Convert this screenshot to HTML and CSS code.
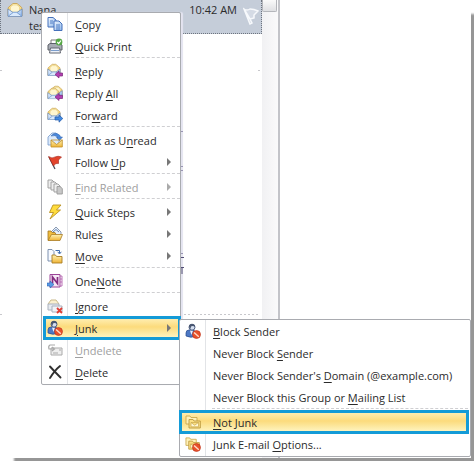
FILE: index.html
```
<!DOCTYPE html>
<html lang="en">
<head>
  <meta charset="UTF-8">
  <title>Inbox</title>
  <link rel="stylesheet" href="styles.css">
</head>
<body>

<!-- shared icon shapes -->
<svg class="defs" width="0" height="0" aria-hidden="true">
  <defs>
    <linearGradient id="gold" x1="0" y1="0" x2="0" y2="1">
      <stop offset="0" stop-color="#fff3b5"/><stop offset="1" stop-color="#efb334"/>
    </linearGradient>
    <linearGradient id="blue" x1="0" y1="0" x2="1" y2="1">
      <stop offset="0" stop-color="#f2f8ff"/><stop offset="1" stop-color="#8db6ea"/>
    </linearGradient>
    <symbol id="envelope" viewBox="0 0 16 16">
      <path d="M1 7 Q1 5 3 4 L6 1.5 H10 L13 4 Q15 5 15 7 V14 H1 Z" fill="url(#gold)" stroke="#c49a45" stroke-width=".8"/>
      <path d="M3.5 5 L6 3 H10 L12.5 5 V9 L8 11 L3.5 9 Z" fill="#fff6cf" stroke="#e0c67c" stroke-width=".5"/>
      <path d="M1 7 L6 10.5 H10 L15 7 V14.3 H1 Z" fill="url(#blue)" stroke="#648cc5" stroke-width=".8"/>
      <path d="M1.5 14 L6.5 10.2 H9.5 L14.5 14" fill="#d9e9fc" stroke="#6f98d0" stroke-width=".8"/>
    </symbol>
    <symbol id="blocked" viewBox="0 0 16 16">
      <path d="M1 13 V10 Q1 7 4 7 H7 Q11 7 11 11 V13 Q6 15.5 1 13Z" fill="#4d78c4" stroke="#274a8c" stroke-width=".7"/>
      <path d="M5 7.5 L6.5 12 L8 7.5Z" fill="#eef4ff"/>
      <circle cx="7" cy="4.2" r="3" fill="#d5dff0" stroke="#3c4e74" stroke-width=".9"/>
      <path d="M4 4 Q4 1 7 1 Q10 1 10 4 Q8 2.5 6 3.5 L5.5 6Z" fill="#48566f"/>
      <circle cx="11.5" cy="11.5" r="4" fill="#e8512b" stroke="#ba2c16" stroke-width=".6"/>
      <path d="M9 9.5 L13.8 13.7" stroke="#ffd9c6" stroke-width="1.5"/>
    </symbol>
    <symbol id="folders" viewBox="0 0 16 16">
      <path d="M1 10 V2 H5 L6 3.5 H12 V10Z" fill="#fff1b8" stroke="#c9a84e" stroke-width=".9"/>
      <path d="M4 14 V5.5 H8 L9 7 H15.3 V14Z" fill="#fbdf83" stroke="#bb9840" stroke-width=".9"/>
      <path d="M6 8.5 H13.5 V12.8 H6Z M6 8.5 L9.7 11.2 L13.5 8.5" fill="#fff8d7" stroke="#c9a84e" stroke-width=".7"/>
    </symbol>
  </defs>
</svg>

<main class="window">
  <section class="mail-list">
    <article class="mail">
      <svg class="icon"><use href="#envelope"/></svg>
      <div class="mail-text">
        <div>Nana</div>
        <div>test</div>
      </div>
      <time class="mail-time">10:42 AM</time>
      <svg class="flag" viewBox="0 0 16 18"><path d="M1 2 Q4 4 7 2 Q11 2 15 4 L11 8 L11 11 L7 12 L9 16 L7 17 Z M1 2 L7 12" fill="#d5dbe5" stroke="#f7f9fc" stroke-width="1.5"/></svg>
    </article>
    <hr class="group-line">
    <hr class="group-line group-line-last">
    <svg class="peek" viewBox="0 0 4 150" aria-hidden="true">
      <path d="M0 11.5 H2 M0 46.5 H2 M0 50.5 H2 M0 133.5 H2" stroke="#9a96b4" fill="none"/>
      <path d="M0 137.5 H3 M0 147.5 H3 M1 147 V154" stroke="#514c73" fill="none"/>
    </svg>
  </section>
  <div class="scrollbar"><div class="thumb"></div></div>

  <div class="menu context-menu">
    <button class="item"><svg class="icon" viewBox="0 0 16 16"><g fill="url(#blue)" stroke="#4571bb"><path d="M1 1.5 H6 L9 4 V11 H1Z"/><path d="M7 5 H12 L15 8 V14.5 H7Z"/></g><path d="M3 5 H6 M3 7 H6 M9 9 H13 M9 11 H13 M9 13 H13" stroke="#4f7dc4"/></svg><span><u>C</u>opy</span></button>
    <button class="item"><svg class="icon" viewBox="0 0 16 16"><path d="M4 7 V2 H11 V7" fill="#fff" stroke="#777"/><path d="M1 7 L3 5.5 H13 L15 7 V12 H1Z" fill="#a7abb4" stroke="#5d6069"/><path d="M3.5 10 H12.5 L13.5 15 H2.5Z" fill="#edf1f8" stroke="#656973"/><path d="M4 12.5 H12" stroke="#7b9dcc"/><circle cx="12" cy="4" r="3.4" fill="#55a944"/><path d="M10.3 4 L11.7 5.5 L14 2.5" fill="none" stroke="#fff" stroke-width="1.2"/></svg><span><u>Q</u>uick Print</span></button>
    <hr>
    <button class="item"><svg class="icon" viewBox="0 0 16 16"><use href="#envelope" width="14" height="14"/><path d="M8 11.5 L12 8 V10 H15.5 V13 H12 V15Z" fill="#b13eb0" stroke="#782578" stroke-width=".7"/></svg><span><u>R</u>eply</span></button>
    <button class="item"><svg class="icon" viewBox="0 0 16 16"><use href="#envelope" x="3" width="13" height="13"/><use href="#envelope" y="2" width="13" height="13"/><path d="M8 12 L12 8.5 V10.3 H15.5 V13.5 H12 V15.5Z" fill="#b13eb0" stroke="#782578" stroke-width=".7"/></svg><span>Reply <u>A</u>ll</span></button>
    <button class="item"><svg class="icon" viewBox="0 0 16 16"><use href="#envelope" width="14" height="14"/><path d="M15.8 11.5 L12 8 V10 H8 V13 H12 V15.2Z" fill="#4189e0" stroke="#2259a8" stroke-width=".7"/></svg><span>For<u>w</u>ard</span></button>
    <hr>
    <button class="item"><svg class="icon" viewBox="0 0 16 16"><path d="M1 5 L5 1 H9 L12 4 V13 H1Z" fill="#dceafb" stroke="#7298cb" stroke-width=".8"/><path d="M4 4 Q8 -1 13 3.5 L13.5 5 H15.5 L12.5 8.5 L9.5 5.5 H11 Q8 2.5 4 4Z" fill="#4a89dc" stroke="#2c5ea8" stroke-width=".5"/><path d="M4 8 H15.3 V15 H4Z M4 8 L9.6 12.5 L15.3 8" fill="url(#gold)" stroke="#c08f28" stroke-width=".8"/></svg><span>Mark as U<u>n</u>read</span></button>
    <button class="item"><svg class="icon" viewBox="0 0 16 16"><path d="M2 3 L8 15" stroke="#4a4a55" stroke-width="1.3"/><path d="M1.5 2.5 Q5 5 8 3 Q11 1.5 14.5 3 L11.5 6 L11.5 9.5 Q8.5 8.5 6.5 12Z" fill="#e2442c" stroke="#a32519" stroke-width=".6"/></svg><span>Follow <u>U</u>p</span><i class="arrow"></i></button>
    <hr>
    <button class="item" disabled><svg class="icon" viewBox="0 0 16 16"><g fill="#eee" stroke="#999" stroke-width=".9"><path d="M1 1 H5 L7 3 V9 H1Z"/><path d="M4 3 H8 L10 5 V11 H4Z"/><path d="M7 5 H11 L13 7 V13 H7Z"/><path d="M10 7.5 H13 L15.3 9.5 V15 H10Z" fill="#c8c8c8"/></g></svg><span><u>F</u>ind Related</span><i class="arrow"></i></button>
    <hr>
    <button class="item"><svg class="icon" viewBox="0 0 16 16"><path d="M6 1 H14 L9.5 6 H13.5 L3 15 L6.5 8.5 H2.5Z" fill="#ffdc3d" stroke="#b99224" stroke-width=".9"/></svg><span><u>Q</u>uick Steps</span><i class="arrow"></i></button>
    <button class="item"><svg class="icon" viewBox="0 0 16 16"><path d="M3 7 L9 1 L14 6 V10 H3Z" fill="#e8f0fa" stroke="#6e819e" stroke-width=".8"/><path d="M6 6 L9 3.5 L12 6" fill="none" stroke="#6687b7"/><path d="M1 14 V5 H4 L5 6.5 H8 L9 8.5 L4 14Z" fill="#f1bd3d" stroke="#9f7423" stroke-width=".8"/><path d="M1 14.5 L4.5 8.5 H15.5 L13 14.5Z" fill="url(#gold)" stroke="#a97c24" stroke-width=".8"/></svg><span>Rule<u>s</u></span><i class="arrow"></i></button>
    <button class="item"><svg class="icon" viewBox="0 0 16 16"><path d="M1 1.5 H5 L7 3.5 V13 H1Z" fill="#f7faff" stroke="#7187a8" stroke-width=".9"/><path d="M8.5 2.5 H12.5 V5 M10.7 3.8 L12.5 6 L14.3 3.8" stroke="#3f6dae" fill="none"/><path d="M5 15 V7 H8.5 L9.5 8.5 H15 V15Z" fill="url(#gold)" stroke="#a87d25" stroke-width=".9"/></svg><span><u>M</u>ove</span><i class="arrow"></i></button>
    <hr>
    <button class="item"><svg class="icon" viewBox="0 0 16 16"><path d="M3 1.5 H13 V14 H3Z" fill="#f6e9f6" stroke="#9c4498"/><path d="M13 3 H15 V13 H13 M13 6 H15 M13 9 H15" fill="none" stroke="#b465b0" stroke-width=".9"/><path d="M5.5 10.5 V4 L10.5 10.5 V4" fill="none" stroke="#842b80" stroke-width="1.7"/><path d="M0 10 H3 V8 L7 11.5 L3 15 V13 H0Z" fill="#5a9ae5" stroke="#2c65b1" stroke-width=".6"/></svg><span>One<u>N</u>ote</span></button>
    <hr>
    <button class="item"><svg class="icon" viewBox="0 0 16 16"><path d="M1 6 L4 2 H9 L12 6" fill="#faf0cf" stroke="#c9b98a"/><path d="M1 6 H12 V12 H1Z" fill="#e7ebf1" stroke="#aab1bd"/><path d="M5 8 H15 V14 H5Z" fill="#f1f3f7" stroke="#a8b0bd"/><path d="M10 10 L15 15 M15 10 L10 15" stroke="#de3d34" stroke-width="1.8"/></svg><span><u>I</u>gnore</span></button>
    <button class="item selected"><svg class="icon"><use href="#blocked"/></svg><span><u>J</u>unk</span><i class="arrow"></i></button>
    <button class="item" disabled><svg class="icon" viewBox="0 0 16 16"><path d="M4 6 H15 V13 H4Z" fill="#eee" stroke="#aaa"/><path d="M6 11 H11 M12 8 H14" stroke="#aaa"/><path d="M8 3 H3 Q1 4 2 7 H7 M5 5 L7.5 7 L5 9" fill="none" stroke="#aaa" stroke-width="1.2"/></svg><span><u>U</u>ndelete</span></button>
    <button class="item"><svg class="icon" viewBox="0 0 16 16"><path d="M3 2.5 Q7 7 13.5 13.5 M13 2 Q8 6 3 14" fill="none" stroke="#303030" stroke-width="1.9" stroke-linecap="round"/></svg><span><u>D</u>elete</span></button>
  </div>

  <div class="menu submenu">
    <button class="item"><svg class="icon"><use href="#blocked"/></svg><span><u>B</u>lock Sender</span></button>
    <button class="item"><span class="icon"></span><span>Never Block <u>S</u>ender</span></button>
    <button class="item"><span class="icon"></span><span>Never Block Sender's <u>D</u>omain (@example.com)</span></button>
    <button class="item"><span class="icon"></span><span>Never Block this Group or <u>M</u>ailing List</span></button>
    <hr>
    <button class="item selected"><svg class="icon"><use href="#folders"/></svg><span><u>N</u>ot Junk</span></button>
    <button class="item"><svg class="icon" viewBox="0 0 16 16"><use href="#folders" width="15" height="15"/><circle cx="11.5" cy="11.5" r="4" fill="#e8512b" stroke="#ba2c16" stroke-width=".6"/><path d="M9 9.5 L13.8 13.7" stroke="#ffd9c6" stroke-width="1.5"/></svg><span>Junk E-mail <u>O</u>ptions...</span></button>
  </div>
</main>

</body>
</html>
```
FILE: styles.css
```
* {
  box-sizing: border-box;
}

body {
  margin: 0;
  height: 100vh;
  padding: 0 3px 3px 0;
  overflow: hidden;
  background: #fff;
  font-family: "Open Sans", "Noto Sans", sans-serif;
  font-size: 11px;
  color: #2b2b2b;
}

.defs {
  position: absolute;
}

.window {
  position: relative;
  display: flex;
  height: 100%;
  background: #fff;
  box-shadow: 14px 14px 2px #969696;
}

.mail-list {
  position: relative;
  flex: 0 0 262px;
}

.mail {
  display: flex;
  height: 34px;
  padding: 2px 2px 0 6px;
  border: 1px dotted #6d747f;
  border-top: none;
  background: #c5cdd9;
  line-height: 16px;
}

.mail-text {
  flex: 1;
  padding-left: 6px;
}

.mail-time {
  padding-right: 6px;
}

.flag {
  width: 16px;
  height: 18px;
  margin-top: 5px;
}

/* only the ends of the first line are drawn */
.group-line {
  height: 1px;
  margin: 36px 2px 0 0;
  border: none;
  background: linear-gradient(to right, #c8c8cc 2px, transparent 2px, transparent calc(100% - 2px), #c8c8cc calc(100% - 2px));
}

.group-line-last {
  margin-top: 243px;
  background: linear-gradient(to right, transparent 2px, #fff 2px, #fff 180px, transparent 180px),
    repeating-linear-gradient(to right, #c8c8cc 0, #c8c8cc 2px, #fff 2px, #fff 4px);
}

.peek {
  position: absolute;
  left: 181px;
  top: 120px;
  width: 4px;
  height: 150px;
  overflow: visible;
  z-index: 1;
}

.scrollbar {
  flex: 0 0 18px;
  background: linear-gradient(to right, #f1f1f3, #fafafb);
  border-right: 2px solid #c3c4c9;
}

.thumb {
  height: 12px;
  margin-right: 1px;
  border: 1px solid #b4b6bb;
  border-top: none;
  border-radius: 0 0 2px 2px;
  background: linear-gradient(#fafafa, #dfe0e3);
}

.menu {
  position: absolute;
  display: flex;
  flex-direction: column;
  border: 1px solid #a9abb0;
  border-radius: 2px;
  background: linear-gradient(to right, #fff 25px, #e2e4e7 25px, #e2e4e7 26px, #fff 26px);
}

.context-menu {
  left: 41px;
  top: 12px;
  width: 140px;
  padding: 0 0 1px 2px;
  box-shadow: 2px 0 1px #e4e4f0;
}

.submenu {
  left: 179px;
  top: 319px;
  right: 0;
  padding: 0 2px 1px 0;
  z-index: 2;
}

.menu hr {
  width: calc(100% - 32px);
  height: 3px;
  margin: 0 0 0 auto;
  border: none;
  border-top: 1px dashed #cfcfd2;
}

.item {
  display: flex;
  align-items: center;
  height: 22px;
  padding: 0 9px 0 3px;
  border: none;
  background: none;
  font: inherit;
  color: inherit;
  text-align: left;
  white-space: nowrap;
}

.submenu .item {
  padding-left: 5px;
}

.item:disabled {
  color: #a0a0a0;
}

.item.selected {
  background: linear-gradient(#fff2bd, #fcdb7c 45%, #fce391 60%, #fff8cc);
  outline: 3px solid #149bd7;
  outline-offset: -2px;
}

.item u {
  text-underline-offset: 2px;
}

.icon {
  flex: none;
  width: 16px;
  height: 16px;
}

.item .icon {
  margin-right: 12px;
}

.arrow {
  margin-left: auto;
  border: 4px solid transparent;
  border-left-color: #777;
  border-right: none;
}

.item:disabled .arrow {
  border-left-color: #aaa;
}
```
